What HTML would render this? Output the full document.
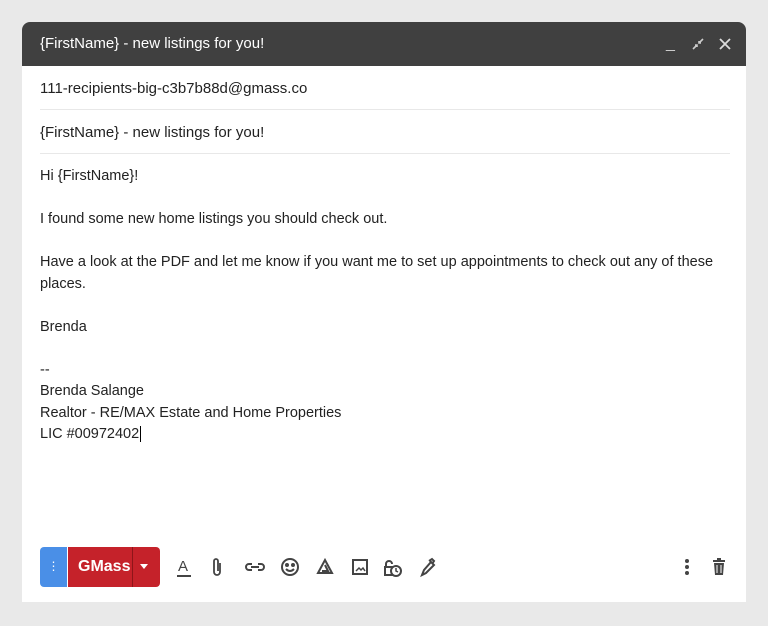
<!DOCTYPE html><html><head><style>
body{margin:0;width:768px;height:626px;background:#e9e9e9;font-family:"Liberation Sans",Arial,sans-serif;position:relative;overflow:hidden}
.card{position:absolute;left:22px;top:22px;width:724px;height:580px;background:#fff;border-radius:8px 8px 0 0;overflow:hidden}
.hd{height:44px;background:#404040;color:#fff;font-size:15px;line-height:44px;padding-left:18px;position:relative}
.row{position:absolute;left:18px;right:16px;font-size:15px;color:#222;border-bottom:1px solid #e8e8e8;height:43px;line-height:45px}
.body{position:absolute;left:18px;top:144px;font-size:14.5px;color:#222;line-height:21.5px}
.ic{position:absolute;top:533px}
</style></head><body><div class="card">
<div class="hd">{FirstName} - new listings for you!
<span style="position:absolute;left:644px;top:0;color:#ccc;font-size:16px">_</span>
<svg style="position:absolute;left:670px;top:16px" width="12" height="12" viewBox="0 0 12 12" stroke="#ccc" stroke-width="1.6" fill="none"><path d="M1 11L5 7M3 7h2v2M11 1L7 5M7 3v2h2"/></svg>
<svg style="position:absolute;left:697px;top:16px" width="12" height="12" viewBox="0 0 12 12" stroke="#ddd" stroke-width="1.8"><path d="M1 1L11 11M11 1L1 11"/></svg>
</div>
<div class="row" style="top:44px">111-recipients-big-c3b7b88d@gmass.co</div>
<div class="row" style="top:88px">{FirstName} - new listings for you!</div>
<div class="body">Hi {FirstName}!<br><br>I found some new home listings you should check out.<br><br>Have a look at the PDF and let me know if you want me to set up appointments to check out any of these<br>places.<br><br>Brenda<br><br>--<br>Brenda Salange<br>Realtor - RE/MAX Estate and Home Properties<br>LIC #00972402<span style="border-left:1px solid #000;margin-left:1px"></span></div>
<div style="position:absolute;left:18px;top:525px;width:27px;height:40px;background:#4a8fe7;border-radius:4px 0 0 4px;color:#fff;text-align:center;line-height:38px;font-size:12px">⋮</div>
<div style="position:absolute;left:46px;top:525px;width:92px;height:40px;background:#c5222a;border-radius:0 4px 4px 0;color:#fff;font-weight:bold;font-size:16px;line-height:40px">
<span style="position:absolute;left:10px">GMass</span><span style="position:absolute;left:64px;top:0;width:1px;height:40px;background:#8e1519"></span>
<span style="position:absolute;left:72px;top:17px;border:4px solid transparent;border-top:5px solid #fff"></span></div>
<svg class="ic" style="left:150px" width="300" height="24" viewBox="0 0 300 24" fill="none" stroke="#444" stroke-width="2">
<text x="6" y="16" font-size="15" fill="#444" stroke="none" font-family="Liberation Sans">A</text><path d="M5 21h14"/>
<path d="M48 8v9a3 3 0 0 1-6 0V6a2 2 0 0 1 4 0v10" stroke-width="1.8"/>
<path d="M80 9h-3a3 3 0 0 0 0 6h3M86 9h3a3 3 0 0 1 0 6h-3M79 12h8"/>
<circle cx="118" cy="12" r="8"/><circle cx="115" cy="10" r="1" fill="#444"/><circle cx="121" cy="10" r="1" fill="#444"/><path d="M114 14q4 4 8 0"/>
<path d="M153 5l7 13h-14zM153 10l3 6h-6"/>
<rect x="181" y="5" width="14" height="14"/><path d="M184 16l3-3 2 2 2-2 2 3" stroke-width="1.5"/>
<path d="M213 20v-8h8v8zM214 12V9a3 3 0 0 1 6 0" /><circle cx="224" cy="16" r="5" fill="#fff"/><path d="M224 13v3l2 1" stroke-width="1.5"/>
<path d="M250 20l2-5 7-8 3 3-8 8zM257 6l3-2 2 2-2 3" />
</svg>
<svg class="ic" style="left:655px" width="60" height="24" viewBox="0 0 60 24" fill="#444"><circle cx="10" cy="6" r="2"/><circle cx="10" cy="12" r="2"/><circle cx="10" cy="18" r="2"/><path d="M36 5h12v2H36zM40 3h4v2h-4zM37 8h10l-1 12h-8z" /><path d="M40 10v8M44 10v8" stroke="#fff" stroke-width="1"/></svg>
</div></body></html>
